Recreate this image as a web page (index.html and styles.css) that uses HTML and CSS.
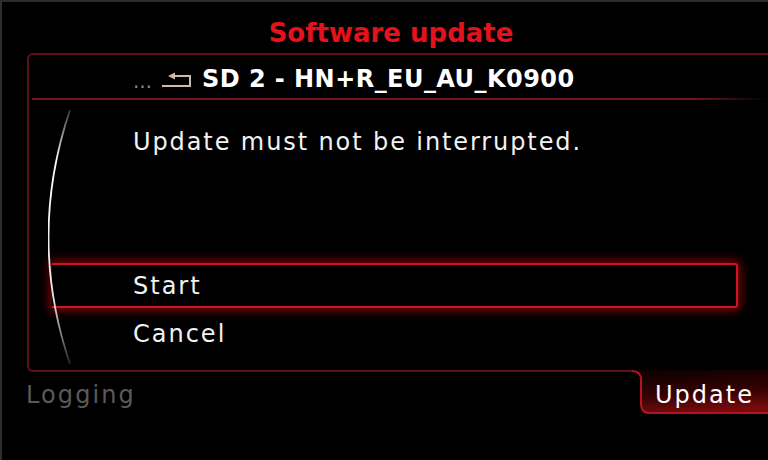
FILE: index.html
```html
<!DOCTYPE html>
<html>
<head>
<meta charset="utf-8">
<link rel="stylesheet" href="styles.css">
</head>
<body>
<div class="screen">
  <h1 class="title">Software update</h1>
  <div class="panel">
    <div class="crumb">
      <span class="dots">…</span>
      <svg class="back" width="30" height="16" viewBox="0 0 30 16">
        <path d="M0 14 H28 V4 H12" fill="none" stroke="#cdbcaa" stroke-width="2"/>
        <polygon points="6,4 13,0.5 13,7.5" fill="#cdbcaa"/>
      </svg>
      <span class="path">SD 2 - HN+R_EU_AU_K0900</span>
    </div>
    <div class="sep"></div>
    <div class="body">
      <svg class="arc" width="24" height="254" viewBox="0 0 24 254">
        <defs>
          <linearGradient id="arcg" x1="0" y1="0" x2="0" y2="1">
            <stop offset="0" stop-color="#fff" stop-opacity="0.2"/>
            <stop offset="0.2" stop-color="#fff" stop-opacity="1"/>
            <stop offset="0.75" stop-color="#fff" stop-opacity="0.9"/>
            <stop offset="1" stop-color="#fff" stop-opacity="0.15"/>
          </linearGradient>
        </defs>
        <path d="M22 0 Q-21 127 22 254" fill="none" stroke="url(#arcg)" stroke-width="1.8"/>
      </svg>
      <div class="content">
        <p class="msg">Update must not be interrupted.</p>
        <ul class="options">
          <li class="opt selected">Start</li>
          <li class="opt">Cancel</li>
        </ul>
      </div>
    </div>
  </div>
  <div class="footer">
    <span class="tab-off">Logging</span>
    <div class="tab-on">
      <svg class="tab-shape" width="136" height="45" viewBox="0 0 136 45">
        <defs>
          <linearGradient id="tabg" x1="0" y1="0" x2="0.2" y2="1">
            <stop offset="0" stop-color="#0a0000"/>
            <stop offset="0.6" stop-color="#360203"/>
            <stop offset="1" stop-color="#760a0c"/>
          </linearGradient>
        </defs>
        <path d="M0 0 H136 V44 H18 Q9 44 9 35 V10 Q9 1 0 1 Z" fill="url(#tabg)"/>
        <path d="M0 1 Q9 1 9 10 V34 Q9 43 18 43 H136" fill="none" stroke="#b3141f" stroke-width="2"/>
      </svg>
      <span class="tab-label">Update</span>
    </div>
  </div>
</div>
</body>
</html>
```

FILE: styles.css
```css
* {
  box-sizing: border-box;
}

html, body {
  margin: 0;
  padding: 0;
  background: #000;
}

body {
  width: 768px;
  height: 460px;
  overflow: hidden;
  font-family: "DejaVu Sans", "Noto Sans", sans-serif;
  color: #f2f2f2;
}

.screen {
  width: 768px;
  height: 460px;
  border-top: 2px solid #2c2c2c;
  border-left: 2px solid #2e2e2e;
  display: flex;
  flex-direction: column;
}

.title {
  margin: 0;
  padding: 16px 0 0 12px;
  height: 46px;
  font-size: 26px;
  line-height: 30px;
  font-weight: bold;
  color: #e3121b;
  text-align: center;
}

.panel {
  margin: 5px 0 0 25px;
  border: 2px solid #5e0f1c;
  border-right: none;
  border-radius: 6px 0 0 6px;
  display: flex;
  flex-direction: column;
}

.crumb {
  display: flex;
  align-items: center;
  padding: 10px 0 5px 104px;
  height: 43px;
}

.dots {
  font-size: 19px;
  line-height: 28px;
  color: #8a8a8a;
  margin-top: 4px;
}

.back {
  margin: 0 10px 0 10px;
  position: relative;
  top: 1px;
}

.path {
  font-size: 24px;
  line-height: 28px;
  font-weight: bold;
  letter-spacing: 0.45px;
  color: #fff;
}

.sep {
  height: 2px;
  margin-left: 3px;
  background: linear-gradient(to right, #741222 0, #741222 90%, rgba(116, 18, 34, 0) 100%);
}

.body {
  position: relative;
  display: flex;
}

.arc {
  position: absolute;
  left: 19px;
  top: 10px;
}

.content {
  flex: 1;
  padding: 28px 30px 22px 23px;
  display: flex;
  flex-direction: column;
}

.msg {
  margin: 0 0 0 81px;
  font-size: 24px;
  line-height: 28px;
  letter-spacing: 1.9px;
}

.options {
  list-style: none;
  margin: 107px 0 0 0;
  padding: 0;
}

.opt {
  font-size: 24px;
  line-height: 28px;
  letter-spacing: 2px;
  padding: 12px 0 0 81px;
}

.opt.selected {
  padding: 7px 0 6px 81px;
  border: 2px solid #d0141f;
  border-left: none;
  border-radius: 0 3px 3px 0;
  box-shadow: 0 0 10px 3px rgba(185, 0, 12, 0.65);
}

.footer {
  margin-top: -2px;
  display: flex;
  justify-content: space-between;
  align-items: flex-start;
}

.tab-off {
  padding: 11px 0 0 24px;
  font-size: 24px;
  line-height: 28px;
  letter-spacing: 2.1px;
  color: #5a5a5a;
}

.tab-on {
  position: relative;
  width: 136px;
  height: 45px;
  background: #000;
  padding: 11px 0 0 23px;
}

.tab-shape {
  position: absolute;
  left: 0;
  top: 0;
}

.tab-label {
  position: relative;
  display: block;
  font-size: 24px;
  line-height: 28px;
  letter-spacing: 2px;
  color: #fff;
}
```
